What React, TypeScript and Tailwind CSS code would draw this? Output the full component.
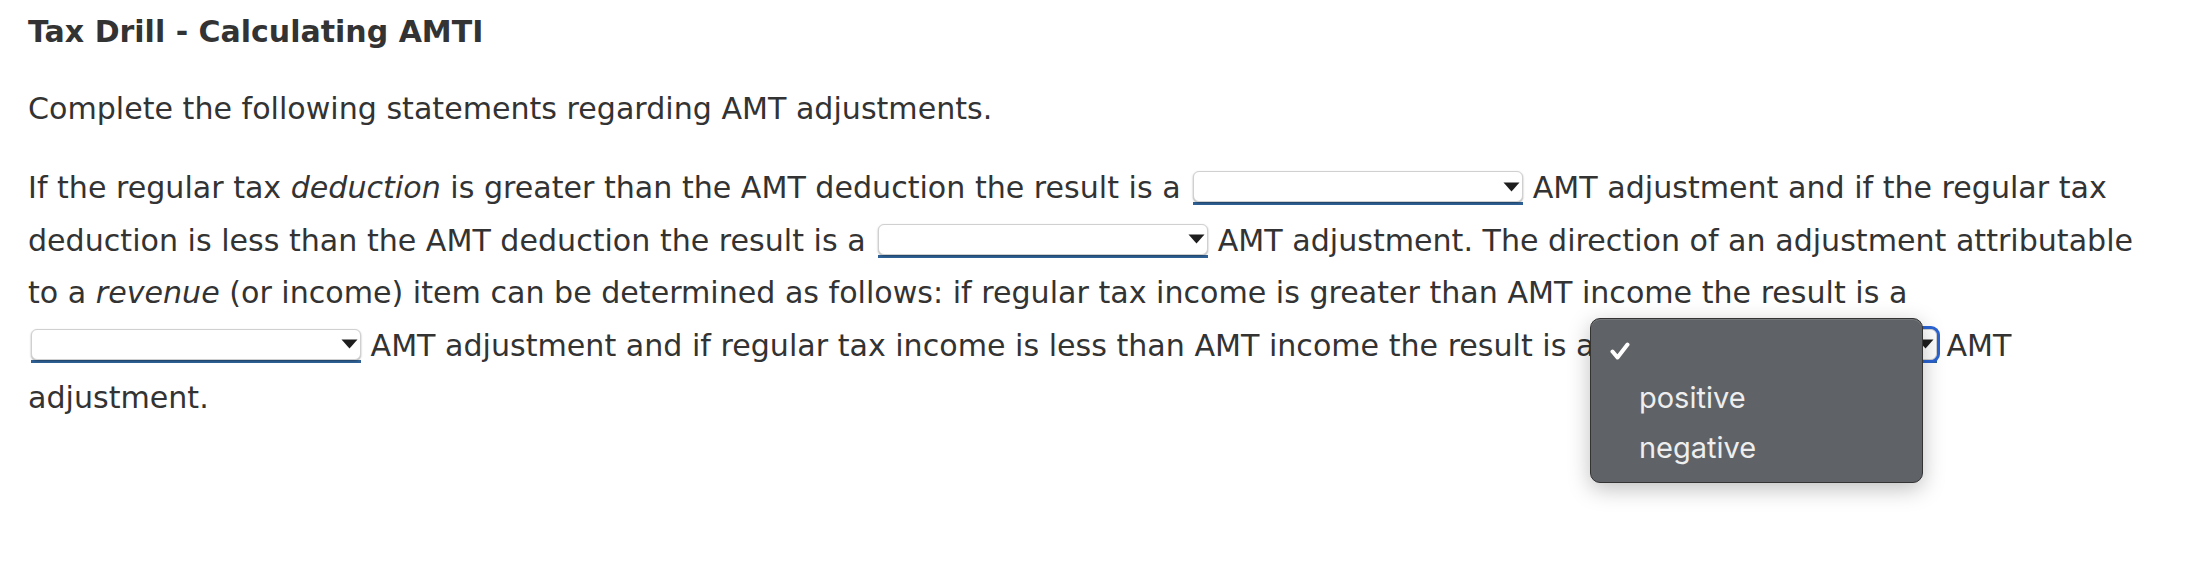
import React from "react";

function Dropdown({ open = false }: { open?: boolean }) {
  return (
    <span className="relative ml-[3px] inline-block h-[34px] w-[330px] border-b-[3px] border-[#2f6196] align-text-bottom">
      <span
        className={
          "flex h-[31px] w-full items-center justify-end rounded-[6px] border border-[#d0d0d0] bg-white pr-[2px] shadow-[0_1px_2px_rgba(0,0,0,0.35)] " +
          (open ? "ring-[3px] ring-[#2a63d2]" : "")
        }
      >
        <svg width="17" height="10" viewBox="0 0 17 10">
          <path d="M0.5 0.5 L16.5 0.5 L8.5 9.5 Z" fill="#1e1e1e" />
        </svg>
      </span>
      {open && (
        <span className="absolute left-[-17px] top-[-11px] z-10 block h-[165px] w-[333px] rounded-[10px] border border-[#333] bg-[#5f6266] py-[7px] shadow-[0_6px_22px_rgba(0,0,0,0.25),inset_0_1px_0_rgba(255,255,255,0.15)] font-['Inter',sans-serif] text-[29px] text-[#eeeeee]">
          <span className="flex h-[50px] items-center pl-[19px]">
            <svg width="20" height="18" viewBox="0 0 20 18">
              <path
                d="M2.5 9.5 L7.5 15.5 L17.5 2.5"
                fill="none"
                stroke="#ffffff"
                strokeWidth="4"
                strokeLinecap="round"
                strokeLinejoin="round"
              />
            </svg>
          </span>
          <span className="block h-[50px] pl-[48px] leading-[44px]">positive</span>
          <span className="block h-[50px] pl-[48px] leading-[44px]">negative</span>
        </span>
      )}
    </span>
  );
}

export default function App() {
  return (
    <div className="min-h-[578px] w-full bg-white px-[28px] pt-[14px] font-['DejaVu_Sans',Verdana,sans-serif] text-[#333333]">
      <h1 className="text-[30px] font-bold leading-[36px]">
        Tax Drill - Calculating AMTI
      </h1>

      <p className="mt-[33px] text-[30.1px] leading-[52.4px]">
        Complete the following statements regarding AMT adjustments.
      </p>

      <p className="mt-[27px] text-[30.1px] leading-[52.4px]">
        If the regular tax <em>deduction</em> is greater than the AMT deduction
        the result is a <Dropdown /> AMT adjustment and if the regular tax
        deduction is less than the AMT deduction the result is a <Dropdown />{" "}
        AMT adjustment. The direction of an adjustment attributable to a{" "}
        <em>revenue</em> (or income) item can be determined as follows: if
        regular tax income is greater than AMT income the result is a{" "}
        <Dropdown /> AMT adjustment and if regular tax income is less than AMT
        income the result is a <Dropdown open /> AMT adjustment.
      </p>
    </div>
  );
}
